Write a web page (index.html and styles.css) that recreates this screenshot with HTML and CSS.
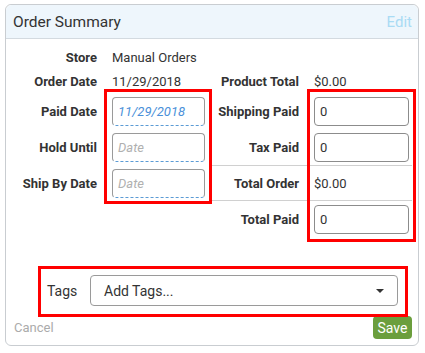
FILE: index.html
```html
<!DOCTYPE html>
<html>
<head>
<meta charset="utf-8">
<link rel="stylesheet" href="styles.css">
</head>
<body>
<div class="card">
  <div class="card-header">
    <span class="title">Order Summary</span>
    <span class="edit">Edit</span>
  </div>
  <div class="card-body">
    <div class="fields">
      <div class="col col-left">
        <div class="row row-short"><span class="label">Store</span><span class="value">Manual Orders</span></div>
        <div class="row row-short"><span class="label">Order Date</span><span class="value">11/29/2018</span></div>
        <div class="row"><span class="label">Paid Date</span><span class="date-input filled">11/29/2018</span></div>
        <div class="row"><span class="label">Hold Until</span><span class="date-input">Date</span></div>
        <div class="row"><span class="label">Ship By Date</span><span class="date-input">Date</span></div>
      </div>
      <div class="col col-right">
        <div class="row row-short"><span class="label">Product Total</span><span class="value">$0.00</span></div>
        <div class="row"><span class="label">Shipping Paid</span><span class="num-input">0</span></div>
        <div class="row"><span class="label">Tax Paid</span><span class="num-input">0</span></div>
        <div class="row row-lined"><span class="label">Total Order</span><span class="value">$0.00</span></div>
        <div class="row"><span class="label">Total Paid</span><span class="num-input">0</span></div>
      </div>
    </div>
    <div class="tags-row">
      <span class="tags-label">Tags</span>
      <div class="tags-select">
        <span class="tags-placeholder">Add Tags...</span>
        <span class="caret"></span>
      </div>
    </div>
    <div class="footer">
      <span class="cancel">Cancel</span>
      <span class="save">Save</span>
    </div>
  </div>
  <div class="mark mark-left"></div>
  <div class="mark mark-right"></div>
  <div class="mark mark-tags"></div>
</div>
</body>
</html>
```
FILE: styles.css
```css
html, body {
  margin: 0;
  padding: 0;
  background: #ffffff;
}
body {
  font-family: Roboto, "Liberation Sans", sans-serif;
  color: #333333;
}
.card {
  position: relative;
  box-sizing: border-box;
  margin: 4px 0 0 5px;
  width: 414px;
  height: 342px;
  border: 1px solid #c9cdd1;
  border-radius: 6px;
  overflow: visible;
}
.card-header {
  box-sizing: border-box;
  height: 34px;
  background: #eef6fc;
  border-bottom: 1px solid #d3dae0;
  border-radius: 6px 6px 0 0;
  display: flex;
  align-items: center;
  justify-content: space-between;
  padding: 0 6px 0 7px;
}
.title {
  font-size: 15.5px;
  color: #333333;
}
.edit {
  font-size: 15px;
  color: #a9dbf4;
}
.card-body {
  padding-top: 6px;
}
.fields {
  display: flex;
  gap: 5px;
}
.col {
  display: flex;
  flex-direction: column;
}
.col-left {
  width: 199px;
}
.col-right {
  width: 202px;
  padding-top: 24px;
}
.row {
  height: 36px;
  display: flex;
  align-items: center;
  gap: 15px;
  font-size: 13px;
  box-sizing: border-box;
}
.row-short {
  height: 24px;
}
.row-lined {
  border-top: 1px solid #d0d0d0;
  border-bottom: 1px solid #d0d0d0;
}
.label {
  font-weight: 700;
  text-align: right;
  color: #333333;
  flex: none;
}
.col-left .label {
  width: 91px;
}
.col-right .label {
  width: 89px;
}
.value {
  color: #333333;
}
.date-input {
  box-sizing: border-box;
  width: 93px;
  height: 29px;
  border: 1px solid #9a9a9a;
  border-bottom: 1px dashed #5b9bd5;
  border-radius: 4px;
  display: flex;
  align-items: center;
  padding-left: 5px;
  font-style: italic;
  color: #b0b0b0;
}
.date-input.filled {
  color: #4a90d9;
}
.num-input {
  box-sizing: border-box;
  width: 95px;
  height: 29px;
  border: 1px solid #8c8c8c;
  border-radius: 4px;
  display: flex;
  align-items: center;
  padding-left: 5px;
  color: #333333;
}
.tags-row {
  display: flex;
  align-items: center;
  margin-top: 38px;
  padding-left: 41px;
}
.tags-label {
  width: 43px;
  font-size: 14px;
  color: #333333;
}
.tags-select {
  box-sizing: border-box;
  width: 308px;
  height: 31px;
  border: 1px solid #9a9a9a;
  border-radius: 4px;
  display: flex;
  align-items: center;
  justify-content: space-between;
  padding: 0 13px 0 13px;
}
.tags-placeholder {
  font-size: 14px;
  color: #333333;
}
.caret {
  width: 0;
  height: 0;
  border-left: 4px solid transparent;
  border-right: 4px solid transparent;
  border-top: 4px solid #333333;
}
.footer {
  display: flex;
  justify-content: space-between;
  align-items: center;
  margin-top: 10px;
  padding: 0 6px 0 8px;
}
.cancel {
  font-size: 13px;
  color: #ababab;
}
.save {
  box-sizing: border-box;
  height: 23px;
  width: 39px;
  background: #6b9e3d;
  color: #ffffff;
  border-radius: 4px;
  font-size: 14px;
  display: flex;
  align-items: center;
  justify-content: center;
}
.mark {
  position: absolute;
  box-sizing: border-box;
  border: 3px solid #ff0000;
}
.mark-left {
  left: 98px;
  top: 84px;
  width: 108px;
  height: 115px;
}
.mark-right {
  left: 301px;
  top: 84px;
  width: 109px;
  height: 153px;
}
.mark-tags {
  left: 32px;
  top: 261px;
  width: 370px;
  height: 51px;
}
```
